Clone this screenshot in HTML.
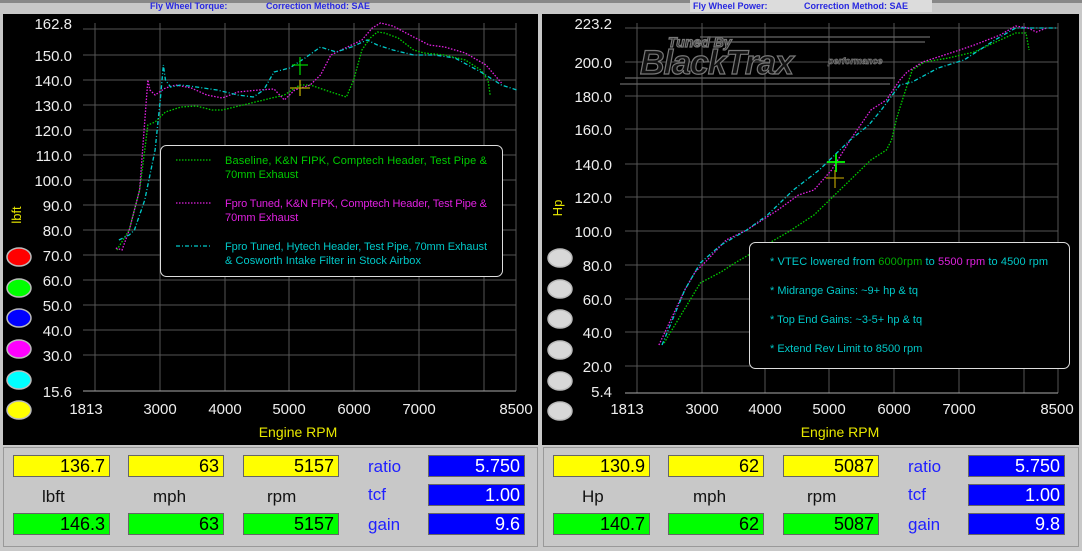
<!DOCTYPE html>
<html><head><meta charset="utf-8"><style>
body{margin:0;width:1082px;height:551px;background:#c8c8c8;overflow:hidden;font-family:"Liberation Sans",sans-serif}
svg{position:absolute;left:0;top:0}
.f{position:absolute;height:22px;border:1px solid #666;box-sizing:border-box;text-align:right;font-size:18px;line-height:21px;padding-right:4px;color:#000}
.y{background:#ffff00}.g{background:#00ff00}.b{background:#0000ff;color:#fff}
.l{position:absolute;font-size:17px;color:#111}
.bl{position:absolute;font-size:17px;color:#2020ff}
</style></head><body>
<svg width="1082" height="551" font-family="Liberation Sans, sans-serif">
<rect x="0" y="0" width="1082" height="551" fill="#c8c8c8"/>
<rect x="0" y="0" width="1082" height="3" fill="#888"/>
<text x="150" y="9" font-size="9" font-weight="bold" fill="#2828e0">Fly Wheel Torque:</text>
<text x="266" y="9" font-size="9" font-weight="bold" fill="#2828e0">Correction Method: SAE</text>
<rect x="690" y="0" width="242" height="12" fill="#dcdcdc"/>
<text x="693" y="9" font-size="9" font-weight="bold" fill="#2828e0">Fly Wheel Power:</text>
<text x="804" y="9" font-size="9" font-weight="bold" fill="#2828e0">Correction Method: SAE</text>
<rect x="3" y="14" width="535" height="431" fill="#000"/>
<rect x="542" y="14" width="537" height="431" fill="#000"/>
<g stroke="#555" stroke-width="1">
<line x1="83" y1="29" x2="516" y2="29"/><line x1="83" y1="55" x2="516" y2="55"/><line x1="83" y1="80" x2="516" y2="80"/><line x1="83" y1="105" x2="516" y2="105"/><line x1="83" y1="130" x2="516" y2="130"/><line x1="83" y1="155" x2="516" y2="155"/><line x1="83" y1="180" x2="516" y2="180"/><line x1="83" y1="205" x2="516" y2="205"/><line x1="83" y1="230" x2="516" y2="230"/><line x1="83" y1="255" x2="516" y2="255"/><line x1="83" y1="280" x2="516" y2="280"/><line x1="83" y1="305" x2="516" y2="305"/><line x1="83" y1="330" x2="516" y2="330"/><line x1="83" y1="355" x2="516" y2="355"/>
<line x1="95" y1="23" x2="95" y2="391"/><line x1="160" y1="23" x2="160" y2="391"/><line x1="225" y1="23" x2="225" y2="391"/><line x1="289" y1="23" x2="289" y2="391"/><line x1="354" y1="23" x2="354" y2="391"/><line x1="419" y1="23" x2="419" y2="391"/><line x1="484" y1="23" x2="484" y2="391"/><line x1="516" y1="23" x2="516" y2="391"/>
<line x1="83" y1="391" x2="516" y2="391" stroke="#aaa"/>
</g>
<g stroke="#555" stroke-width="1" transform="translate(542 0)">
<line x1="83" y1="28" x2="516" y2="28"/><line x1="83" y1="62" x2="516" y2="62"/><line x1="83" y1="96" x2="516" y2="96"/><line x1="83" y1="129" x2="516" y2="129"/><line x1="83" y1="164" x2="516" y2="164"/><line x1="83" y1="197" x2="516" y2="197"/><line x1="83" y1="231" x2="516" y2="231"/><line x1="83" y1="265" x2="516" y2="265"/><line x1="83" y1="299" x2="516" y2="299"/><line x1="83" y1="332" x2="516" y2="332"/><line x1="83" y1="366" x2="516" y2="366"/>
<line x1="95" y1="23" x2="95" y2="393"/><line x1="160" y1="23" x2="160" y2="393"/><line x1="223" y1="23" x2="223" y2="393"/><line x1="287" y1="23" x2="287" y2="393"/><line x1="352" y1="23" x2="352" y2="393"/><line x1="417" y1="23" x2="417" y2="393"/><line x1="482" y1="23" x2="482" y2="393"/><line x1="516" y1="23" x2="516" y2="393"/>
<line x1="83" y1="393" x2="516" y2="393" stroke="#aaa"/>
</g>
<g font-size="15" fill="#eee" text-anchor="end">
<text x="72" y="29">162.8</text><text x="72" y="61">150.0</text><text x="72" y="86">140.0</text><text x="72" y="111">130.0</text><text x="72" y="136">120.0</text><text x="72" y="161">110.0</text><text x="72" y="186">100.0</text><text x="72" y="211">90.0</text><text x="72" y="236">80.0</text><text x="72" y="261">70.0</text><text x="72" y="286">60.0</text><text x="72" y="311">50.0</text><text x="72" y="336">40.0</text><text x="72" y="361">30.0</text><text x="72" y="397">15.6</text>
<text x="612" y="29">223.2</text><text x="612" y="68">200.0</text><text x="612" y="102">180.0</text><text x="612" y="135">160.0</text><text x="612" y="170">140.0</text><text x="612" y="203">120.0</text><text x="612" y="237">100.0</text><text x="612" y="271">80.0</text><text x="612" y="305">60.0</text><text x="612" y="338">40.0</text><text x="612" y="372">20.0</text><text x="612" y="397">5.4</text>
</g>
<g font-size="15" fill="#eee" text-anchor="middle">
<text x="86" y="414">1813</text><text x="160" y="414">3000</text><text x="225" y="414">4000</text><text x="289" y="414">5000</text><text x="354" y="414">6000</text><text x="419" y="414">7000</text><text x="516" y="414">8500</text>
<text x="627" y="414">1813</text><text x="702" y="414">3000</text><text x="765" y="414">4000</text><text x="829" y="414">5000</text><text x="894" y="414">6000</text><text x="959" y="414">7000</text><text x="1057" y="414">8500</text>
</g>
<text x="298" y="437" font-size="14" fill="#e8e800" text-anchor="middle">Engine RPM</text>
<text x="840" y="437" font-size="14" fill="#e8e800" text-anchor="middle">Engine RPM</text>
<text transform="translate(21 215) rotate(-90)" font-size="13" fill="#e8e800" text-anchor="middle">lbft</text>
<text transform="translate(562 208) rotate(-90)" font-size="13" fill="#e8e800" text-anchor="middle">Hp</text>
<!-- BlackTrax watermark -->
<g font-style="italic" font-weight="bold" stroke="#777" stroke-width="1.2" fill="#111">
<text x="668" y="47" font-size="14">Tuned By</text>
<text x="640" y="74" font-size="34" letter-spacing="-1">BlackTrax</text>
<text x="828" y="64" font-size="9" stroke-width="0.7">performance</text>
</g>
<path d="M700 37 L930 37 M695 42 L925 42 M625 78 L895 78 M620 84 L890 84" stroke="#666" stroke-width="1.3" fill="none"/>
<!-- left curves -->
<g fill="none" stroke-width="1.3" transform="scale(1.034 1)">
<polyline stroke="#00cc00" stroke-dasharray="1.5 1.5" points="113,250 125,230 135,190 140,150 143,125 150,122 160,112 175,107 190,106 205,110 215,110 235,105 255,100 275,95 290,85 300,85 320,92 335,97 342,80 350,50 358,38 365,32 372,33 385,38 400,50 410,53 430,55 450,60 465,70 472,80 474,95"/>
<polyline stroke="#e020e0" stroke-dasharray="1.5 1.5" points="112,248 118,250 125,230 135,190 143,80 145,90 150,95 160,88 170,85 185,88 200,95 215,98 230,92 250,90 265,89 275,100 285,90 300,85 310,75 320,55 340,45 350,40 360,28 368,23 380,26 400,37 415,45 430,47 450,53 470,65 485,83"/>
<polyline stroke="#00c8c8" stroke-dasharray="4 2 1 2" points="115,240 125,235 130,230 140,200 150,150 155,100 158,65 160,80 165,87 175,85 190,87 210,90 230,95 245,97 255,90 265,72 280,68 295,58 310,47 325,52 340,47 355,40 365,45 380,50 400,55 420,55 440,58 465,72 485,85 500,90"/>
</g>
<path d="M300 57 L300 75 M292 65 L308 65" stroke="#00cc00" stroke-width="1.3"/>
<path d="M300 80 L300 96 M290 88 L310 88" stroke="#b8a800" stroke-width="1.3"/>
<!-- right curves -->
<g fill="none" stroke-width="1.3" transform="translate(540 0) scale(1.034 1)">
<polyline stroke="#00cc00" stroke-dasharray="1.5 1.5" points="120,343 155,283 175,272 190,262 210,250 240,232 265,215 280,200 300,180 320,160 335,150 340,140 345,118 352,95 360,70 372,62 395,58 420,52 445,40 460,33 470,33 473,50"/>
<polyline stroke="#e020e0" stroke-dasharray="1.5 1.5" points="115,345 140,290 150,272 160,262 180,240 200,230 230,210 250,195 265,190 282,170 300,140 320,110 335,100 348,80 355,72 370,62 400,52 420,45 445,35 460,26 472,28 480,32 490,28"/>
<polyline stroke="#00c8c8" stroke-dasharray="4 2 1 2" points="118,345 140,290 155,263 175,245 200,230 220,215 245,190 270,170 300,140 318,125 330,110 348,85 360,82 385,68 410,60 440,40 460,28 475,28 500,28"/>
</g>
<path d="M836 154 L836 172 M827 162 L845 162" stroke="#00ff00" stroke-width="1.8"/>
<path d="M835 170 L835 188 M826 178 L844 178" stroke="#a89000" stroke-width="1.3"/>
<!-- legends -->
<rect x="160.5" y="145.5" width="342" height="131" rx="6" fill="#000" stroke="#ddd"/>
<g fill="none" stroke-width="1.2">
<line x1="176" y1="160" x2="212" y2="160" stroke="#00cc00" stroke-dasharray="1.5 1.5"/>
<line x1="176" y1="203" x2="212" y2="203" stroke="#e020e0" stroke-dasharray="1.5 1.5"/>
<line x1="176" y1="246" x2="212" y2="246" stroke="#00c8c8" stroke-dasharray="4 2 1 2"/>
</g>
<g font-size="11">
<text x="225" y="164" fill="#00cc00" textLength="262">Baseline, K&amp;N FIPK, Comptech Header, Test Pipe &amp;</text>
<text x="225" y="178" fill="#00cc00">70mm Exhaust</text>
<text x="225" y="207" fill="#e020e0" textLength="262">Fpro Tuned, K&amp;N FIPK, Comptech Header, Test Pipe &amp;</text>
<text x="225" y="221" fill="#e020e0">70mm Exhaust</text>
<text x="225" y="250" fill="#00c8c8" textLength="262">Fpro Tuned, Hytech Header, Test Pipe, 70mm Exhaust</text>
<text x="225" y="264" fill="#00c8c8" textLength="196">&amp; Cosworth Intake Filter in Stock Airbox</text>
</g>
<rect x="749.5" y="242.5" width="320" height="126" rx="6" fill="#000" stroke="#ddd"/>
<g font-size="11" fill="#00c8c8">
<text x="770" y="265" textLength="278">* VTEC lowered from <tspan fill="#00b000">6000rpm</tspan> to <tspan fill="#e020e0">5500 rpm</tspan> to 4500 rpm</text>
<text x="770" y="294">* Midrange Gains: ~9+ hp &amp;  tq</text>
<text x="770" y="323">* Top End Gains: ~3-5+ hp &amp;  tq</text>
<text x="770" y="352">* Extend Rev Limit to 8500 rpm</text>
</g>
<!-- buttons -->
<g stroke="#bbb" stroke-width="1.5">
<ellipse cx="19" cy="257" rx="12" ry="9" fill="#ff0000"/>
<ellipse cx="19" cy="288" rx="12" ry="9" fill="#00ff00"/>
<ellipse cx="19" cy="318" rx="12" ry="9" fill="#0000ff"/>
<ellipse cx="19" cy="349" rx="12" ry="9" fill="#ff00ff"/>
<ellipse cx="19" cy="380" rx="12" ry="9" fill="#00ffff"/>
<ellipse cx="19" cy="410" rx="12" ry="9" fill="#ffff00"/>
<g fill="#d8d8d8">
<ellipse cx="560" cy="258" rx="12" ry="9"/><ellipse cx="560" cy="289" rx="12" ry="9"/><ellipse cx="560" cy="319" rx="12" ry="9"/><ellipse cx="560" cy="350" rx="12" ry="9"/><ellipse cx="560" cy="381" rx="12" ry="9"/><ellipse cx="560" cy="411" rx="12" ry="9"/>
</g></g>
<rect x="3.5" y="447.5" width="534" height="99" fill="none" stroke="#999"/>
<rect x="543.5" y="447.5" width="535" height="99" fill="none" stroke="#999"/>
</svg>
<div class="f y" style="left:13px;top:455px;width:97px">136.7</div>
<div class="f y" style="left:128px;top:455px;width:96px">63</div>
<div class="f y" style="left:243px;top:455px;width:96px">5157</div>
<div class="l" style="left:42px;top:487px">lbft</div>
<div class="l" style="left:153px;top:487px">mph</div>
<div class="l" style="left:267px;top:487px">rpm</div>
<div class="f g" style="left:13px;top:513px;width:97px">146.3</div>
<div class="f g" style="left:128px;top:513px;width:96px">63</div>
<div class="f g" style="left:243px;top:513px;width:96px">5157</div>
<div class="bl" style="left:368px;top:457px">ratio</div>
<div class="bl" style="left:368px;top:485px">tcf</div>
<div class="bl" style="left:368px;top:515px">gain</div>
<div class="f b" style="left:428px;top:455px;width:97px">5.750</div>
<div class="f b" style="left:428px;top:484px;width:97px">1.00</div>
<div class="f b" style="left:428px;top:513px;width:97px">9.6</div>

<div class="f y" style="left:553px;top:455px;width:97px">130.9</div>
<div class="f y" style="left:668px;top:455px;width:96px">62</div>
<div class="f y" style="left:783px;top:455px;width:96px">5087</div>
<div class="l" style="left:582px;top:487px">Hp</div>
<div class="l" style="left:693px;top:487px">mph</div>
<div class="l" style="left:807px;top:487px">rpm</div>
<div class="f g" style="left:553px;top:513px;width:97px">140.7</div>
<div class="f g" style="left:668px;top:513px;width:96px">62</div>
<div class="f g" style="left:783px;top:513px;width:96px">5087</div>
<div class="bl" style="left:908px;top:457px">ratio</div>
<div class="bl" style="left:908px;top:485px">tcf</div>
<div class="bl" style="left:908px;top:515px">gain</div>
<div class="f b" style="left:968px;top:455px;width:97px">5.750</div>
<div class="f b" style="left:968px;top:484px;width:97px">1.00</div>
<div class="f b" style="left:968px;top:513px;width:97px">9.8</div>
</body></html>
